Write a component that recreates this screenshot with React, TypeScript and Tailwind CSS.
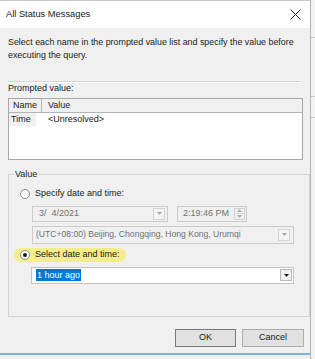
import { ReactNode } from "react";

const font = { fontFamily: '"Liberation Sans", Arial, sans-serif' };

function Radio({ checked }: { checked?: boolean }) {
  return (
    <span className="w-[10px] h-[10px] rounded-full border border-[#8a8a8a] bg-white flex items-center justify-center shrink-0">
      {checked && <span className="w-[4px] h-[4px] rounded-full bg-[#1a1a1a]" />}
    </span>
  );
}

function DropArrow({ disabled }: { disabled?: boolean }) {
  return (
    <span className={`w-[12px] h-[12px] border flex items-center justify-center ${disabled ? "border-[#d4d4d4] bg-[#f4f4f4]" : "border-[#b8b8b8] bg-[#f0f0f0]"}`}>
      <svg width="5" height="3" viewBox="0 0 5 3">
        <path d="M0 0h5L2.5 3z" fill={disabled ? "#a8a8a8" : "#202020"} />
      </svg>
    </span>
  );
}

function Field({ className, children }: { className: string; children: ReactNode }) {
  return <div className={`border flex items-center ${className}`}>{children}</div>;
}

export default function App() {
  return (
    <div className="w-[315px] h-[359px] bg-[#f3f3f3] flex overflow-hidden text-[9px] text-[#1a1a1a]" style={font}>
      <div className="w-[311px] h-full flex flex-col border-r border-[#b0b0b0] shrink-0">
        {/* title bar */}
        <div className="h-[28px] bg-white border-t border-[#c8c8c8] flex items-center justify-between pl-[6px] pr-[9px]">
          <span className="text-[9.3px]">All Status Messages</span>
          <svg width="11" height="11" viewBox="0 0 11 11">
            <path d="M0.5 0.5l10 10M10.5 0.5l-10 10" stroke="#222" strokeWidth="1" />
          </svg>
        </div>

        {/* body */}
        <div className="flex-1 bg-[#f0f0f0] flex flex-col px-[8px]">
          <p className="mt-[8px] leading-[13px] text-[8.9px]">
            Select each name in the prompted value list and specify the value before executing the query.
          </p>
          <div className="mt-[19px] mr-[1px] h-[2px] border-t border-[#d6d6d6] border-b border-b-white" />
          <div className="mt-[-1px] leading-[12px]">Prompted value:</div>

          {/* list view */}
          <div className="mt-[4px] h-[62px] border border-[#a8a8a8] bg-white flex flex-col mr-[-1px]">
            <div className="h-[14px] flex bg-[#f0f0f0] border-b border-[#b4b4b4]">
              <div className="w-[33px] border-r border-[#b4b4b4] flex items-center justify-center">Name</div>
              <div className="flex-1 flex items-center pl-[6px]">Value</div>
            </div>
            <div className="flex h-[13px] items-center">
              <div className="w-[27px] h-full bg-[#f0f0f0] flex items-center pl-[2px]">Time</div>
              <div className="pl-[12px]">&lt;Unresolved&gt;</div>
            </div>
          </div>

          {/* group box */}
          <fieldset className="mt-[8px] h-[149px] border border-[#d4d4d4] mr-[-1px] px-[15px] flex flex-col">
            <legend className="ml-[-10px] px-[1px] leading-[12px]">Value</legend>
            <div className="mt-[7px] flex items-center gap-[5px] -ml-[4px]">
              <Radio />
              <span>Specify date and time:</span>
            </div>
            <div className="mt-[5px] flex gap-[9px] pl-[8px]">
              <Field className="w-[136px] h-[16px] border-[#cbcbcb] bg-[#f0f0f0] text-[#707070] pl-[6px] pr-[2px] justify-between">
                <span>3/&nbsp; 4/2021</span>
                <DropArrow disabled />
              </Field>
              <Field className="w-[70px] h-[16px] border-[#cbcbcb] bg-[#f0f0f0] text-[#707070] pl-[5px] pr-[1px] justify-between">
                <span>2:19:46 PM</span>
                <span className="w-[11px] h-[12px] flex flex-col border border-[#d4d4d4]">
                  <span className="flex-1 border-b border-[#d4d4d4] flex items-center justify-center">
                    <svg width="5" height="3" viewBox="0 0 5 3"><path d="M0 3h5L2.5 0z" fill="#b0b0b0" /></svg>
                  </span>
                  <span className="flex-1 flex items-center justify-center">
                    <svg width="5" height="3" viewBox="0 0 5 3"><path d="M0 0h5L2.5 3z" fill="#b0b0b0" /></svg>
                  </span>
                </span>
              </Field>
            </div>
            <div className="mt-[4px] pl-[8px]">
              <Field className="w-[262px] h-[18px] border-[#cbcbcb] bg-[#f0f0f0] text-[#707070] text-[8.6px] pl-[3px] pr-[3px] justify-between">
                <span>(UTC+08:00) Beijing, Chongqing, Hong Kong, Urumqi</span>
                <DropArrow disabled />
              </Field>
            </div>
            <div className="mt-[4px] -ml-[10px] w-[112px] h-[14px] rounded-full bg-[#f4ee8a] flex items-center gap-[5px] pl-[6px]">
              <Radio checked />
              <span>Select date and time:</span>
            </div>
            <div className="mt-[5px] pl-[7px]">
              <Field className="w-[263px] h-[17px] border-[#c4c4c4] bg-white pl-[4px] pr-[1px] justify-between">
                <span className="bg-[#0078d7] text-white px-[1px] leading-[12px]">1 hour ago</span>
                <DropArrow />
              </Field>
            </div>
          </fieldset>

          {/* buttons */}
          <div className="mt-[12px] flex justify-end gap-[6px] mr-[-2px]">
            <button className="w-[61px] h-[18px] border border-[#7a7a7a] bg-[#e1e1e1] text-[9px]">OK</button>
            <button className="w-[62px] h-[18px] border border-[#adadad] bg-[#e1e1e1] text-[9px]">Cancel</button>
          </div>
          <div className="flex-1" />
        </div>
        <div className="h-[2px] bg-[#7ab3e0]" />
        <div className="h-[4px] bg-[#f0f0f0]" />
      </div>
      <div className="flex-1 flex flex-col">
        <div className="mt-[37px] h-[1px] bg-[#c8c8c8]" />
        <div className="mt-[58px] h-[1px] bg-[#c8c8c8]" />
        <div className="mt-[20px] h-[1px] bg-[#c8c8c8]" />
      </div>
    </div>
  );
}
